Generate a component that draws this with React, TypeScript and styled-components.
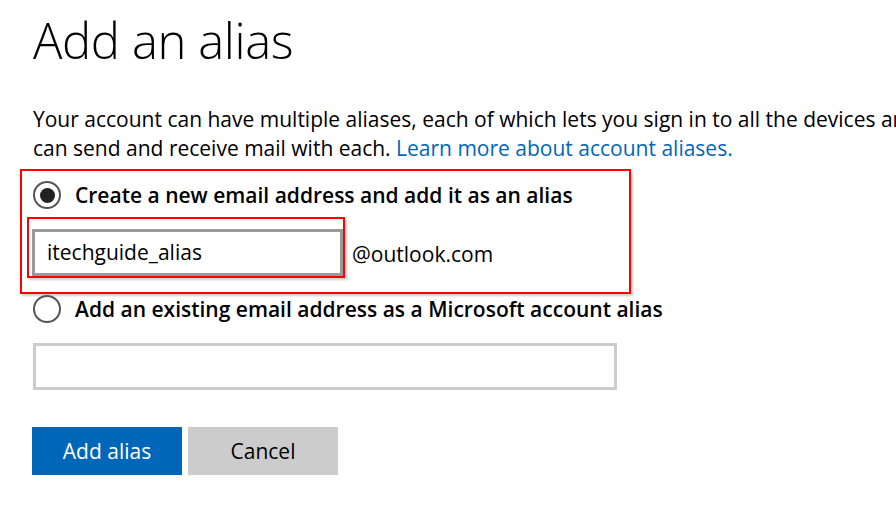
import React from 'react';
import styled, { createGlobalStyle } from 'styled-components';

const GlobalStyle = createGlobalStyle`
  html, body {
    margin: 0;
    padding: 0;
    background: #fff;
    overflow: hidden;
  }
  body {
    font-family: "Open Sans", "Noto Sans", "Liberation Sans", sans-serif;
    color: #000;
  }
`;

const Page = styled.div`
  width: 896px;
  height: 508px;
  overflow: hidden;
  padding: 0 0 0 33px;
  box-sizing: border-box;
`;

const Title = styled.h1`
  margin: 0;
  padding-top: 10px;
  font-size: 49px;
  font-weight: 300;
  line-height: 60px;
  letter-spacing: -0.4px;
`;

const Intro = styled.p`
  margin: 35px 0 0;
  font-size: 21px;
  line-height: 29px;
  white-space: nowrap;
`;

const Link = styled.a`
  color: #0067b8;
  text-decoration: none;
`;

const Highlight = styled.div`
  border: 2px solid #f00;
  box-shadow: 2px 2px 2px rgba(0, 0, 0, 0.2);
`;

const OptionGroup = styled(Highlight)`
  margin: 6px 0 0 -13px;
  width: 611px;
  box-sizing: border-box;
  padding: 10px 0 14px 11px;
`;

const RadioRow = styled.label`
  display: flex;
  align-items: center;
  gap: 14px;
  font-size: 21px;
  font-weight: 600;
  line-height: 28px;
`;

const Radio = styled.span<{ $checked?: boolean }>`
  width: 28px;
  height: 28px;
  box-sizing: border-box;
  border: 2px solid #555;
  border-radius: 50%;
  display: flex;
  align-items: center;
  justify-content: center;
  flex-shrink: 0;

  &::after {
    content: '';
    display: ${({ $checked }) => ($checked ? 'block' : 'none')};
    width: 15px;
    height: 15px;
    border-radius: 50%;
    background: #222;
  }
`;

const AliasRow = styled.div`
  display: flex;
  align-items: flex-end;
  gap: 7px;
  margin: 8px 0 0 -6px;
`;

const InputFrame = styled(Highlight)`
  padding: 10px 0 0 3px;
  width: 318px;
  box-sizing: border-box;
  height: 61px;
  display: flex;
`;

const TextBox = styled.div<{ $width: number; $tone: string }>`
  width: ${({ $width }) => $width}px;
  height: 47px;
  box-sizing: border-box;
  border: 3px solid ${({ $tone }) => $tone};
  padding: 0 0 0 12px;
  font-size: 21px;
  line-height: 41px;
  background: #fff;
`;

const Domain = styled.span`
  font-size: 21px;
  line-height: 28px;
  padding-bottom: 10px;
`;

const SecondOption = styled.div`
  margin-top: 1px;
`;

const ExistingBox = styled(TextBox)`
  margin-top: 20px;
`;

const Actions = styled.div`
  display: flex;
  gap: 6px;
  margin-top: 37px;
  margin-left: -1px;
`;

const Button = styled.button<{ $primary?: boolean }>`
  width: 150px;
  height: 48px;
  border: none;
  font-family: inherit;
  font-size: 21px;
  color: ${({ $primary }) => ($primary ? '#fff' : '#000')};
  background: ${({ $primary }) => ($primary ? '#0067b8' : '#cccccc')};
  padding: 0;
`;

export default function App() {
  return (
    <>
      <GlobalStyle />
      <Page>
        <Title>Add an alias</Title>
        <Intro>
          Your account can have multiple aliases, each of which lets you sign in to all the devices and services you use, and you
          <br />
          can send and receive mail with each. <Link href="#">Learn more about account aliases.</Link>
        </Intro>
        <OptionGroup>
          <RadioRow>
            <Radio $checked />
            Create a new email address and add it as an alias
          </RadioRow>
          <AliasRow>
            <InputFrame>
              <TextBox $width={312} $tone="#999">itechguide_alias</TextBox>
            </InputFrame>
            <Domain>@outlook.com</Domain>
          </AliasRow>
        </OptionGroup>
        <SecondOption>
          <RadioRow>
            <Radio />
            Add an existing email address as a Microsoft account alias
          </RadioRow>
          <ExistingBox $width={584} $tone="#ccc" />
        </SecondOption>
        <Actions>
          <Button $primary>Add alias</Button>
          <Button>Cancel</Button>
        </Actions>
      </Page>
    </>
  );
}
